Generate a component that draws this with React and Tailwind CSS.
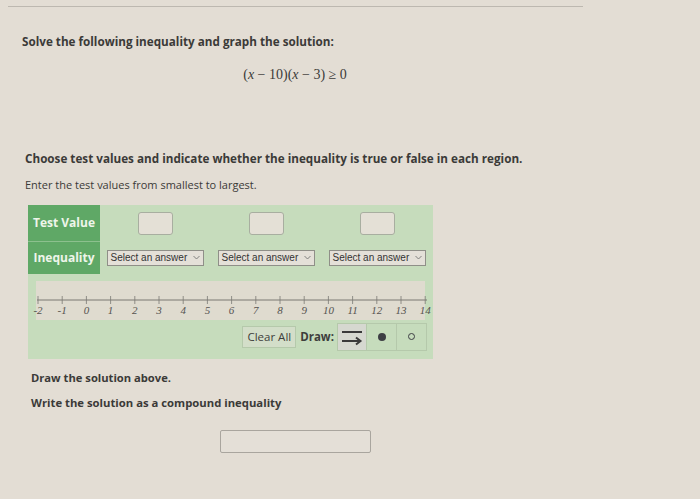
import React from "react";

const ticks = Array.from({ length: 17 }, (_, i) => i - 2);

function SelectBox() {
  return (
    <div className="flex h-[16px] w-[97px] items-center justify-between border border-[#8f8f88] bg-[#e4e0d8] px-[3px] font-['Liberation_Sans',sans-serif] text-[10px] text-[#333]">
      <span>Select an answer</span>
      <svg width="7" height="5" viewBox="0 0 7 5"><path d="M0.5 1 L3.5 4 L6.5 1" fill="none" stroke="#777" strokeWidth="0.9" /></svg>
    </div>
  );
}

export default function App() {
  return (
    <div className="h-[499px] w-[700px] overflow-hidden bg-[#e3ddd4] font-['Open_Sans',sans-serif] text-[#3b3a38]">
      <div className="ml-[8px] mt-[6px] h-px w-[575px] bg-[#bdb8b0]" />
      <div className="pl-[22px] pt-[26px] text-[11.7px] font-bold">Solve the following inequality and graph the solution:</div>
      <div className="mt-[13px] flex justify-center pr-[110px] font-['Liberation_Serif',serif] text-[14px]">
        <span>(<i>x</i> − 10)(<i>x</i> − 3) ≥ 0</span>
      </div>
      <div className="pl-[25px] pt-[65px] text-[11.7px] font-bold">Choose test values and indicate whether the inequality is true or false in each region.</div>
      <div className="pl-[25px] pt-[10px] text-[11px]">Enter the test values from smallest to largest.</div>

      <div className="ml-[28px] mt-[11px] w-[405px] bg-[#c6dcbc] pb-[8px]">
        <div className="flex h-[37px]">
          <div className="flex w-[72px] items-center justify-center border-b border-[#8cc08e] bg-[#5fa866] text-[12px] font-bold text-[#eef5ea]">Test Value</div>
          {[0, 1, 2].map((i) => (
            <div key={i} className="flex flex-1 items-center justify-center pt-[1px]">
              <div className="h-[23px] w-[35px] rounded-[3px] border border-[#a8aea0] bg-[#e4e0d6]" />
            </div>
          ))}
        </div>
        <div className="flex h-[32px]">
          <div className="flex w-[72px] items-center justify-center bg-[#5fa866] text-[12px] font-bold text-[#eef5ea]">Inequality</div>
          {[0, 1, 2].map((i) => (
            <div key={i} className="flex flex-1 items-center justify-center pr-[1px]">
              <SelectBox />
            </div>
          ))}
        </div>
        <div className="mx-[8px] mt-[7px] h-[39px] bg-[#dfdbcf] relative">
          <svg width="392" height="39" className="absolute left-0 top-0">
            <line x1="1" y1="19" x2="391" y2="19" stroke="#7a7873" strokeWidth="1" />
            {ticks.map((t, i) => {
              const x = 2 + i * 24.2;
              return <line key={t} x1={x} y1="15" x2={x} y2="23" stroke="#7a7873" strokeWidth="0.8" />;
            })}
          </svg>
          {ticks.map((t, i) => (
            <span
              key={t}
              className="absolute top-[21px] -translate-x-1/2 font-['Liberation_Serif',serif] text-[11px] italic text-[#55534f]"
              style={{ left: 2 + i * 24.2 }}
            >
              {t}
            </span>
          ))}
        </div>
        <div className="mr-[6px] mt-[3px] flex items-center justify-end">
          <div className="mr-[4px] flex h-[22px] items-center border border-[#b5c9ab] bg-[#d3dec9] px-[4px] text-[11.5px] text-[#3e3e3c]">Clear All</div>
          <span className="mr-[3px] text-[11.5px] font-bold text-[#3e3e3c]">Draw:</span>
          <div className="flex h-[28px]">
            <div className="flex w-[30px] items-center justify-center border border-[#b5c9ab] bg-[#d6d8d0]">
              <svg width="22" height="18" viewBox="0 0 22 18">
                <line x1="1" y1="4" x2="21" y2="4" stroke="#3a3a3a" strokeWidth="2" />
                <line x1="1" y1="13" x2="18" y2="13" stroke="#3a3a3a" strokeWidth="2" />
                <path d="M15 9.5 L19.5 13 L15 16.5" fill="none" stroke="#3a3a3a" strokeWidth="2" />
              </svg>
            </div>
            <div className="flex w-[30px] items-center justify-center border border-l-0 border-[#b5c9ab]">
              <div className="h-[8px] w-[8px] rounded-full bg-[#3d3f44]" />
            </div>
            <div className="flex w-[30px] items-center justify-center border border-l-0 border-[#b5c9ab]">
              <div className="h-[7px] w-[7px] rounded-full border-[1.5px] border-[#3d3f44]" />
            </div>
          </div>
        </div>
      </div>

      <div className="pl-[31px] pt-[11px] text-[11.2px] font-bold">Draw the solution above.</div>
      <div className="pl-[31px] pt-[9px] text-[11.3px] font-bold">Write the solution as a compound inequality</div>
      <div className="ml-[220px] mt-[18px] h-[23px] w-[151px] rounded-[2px] border border-[#a9a59e] bg-[#e4dfd7]" />
    </div>
  );
}
